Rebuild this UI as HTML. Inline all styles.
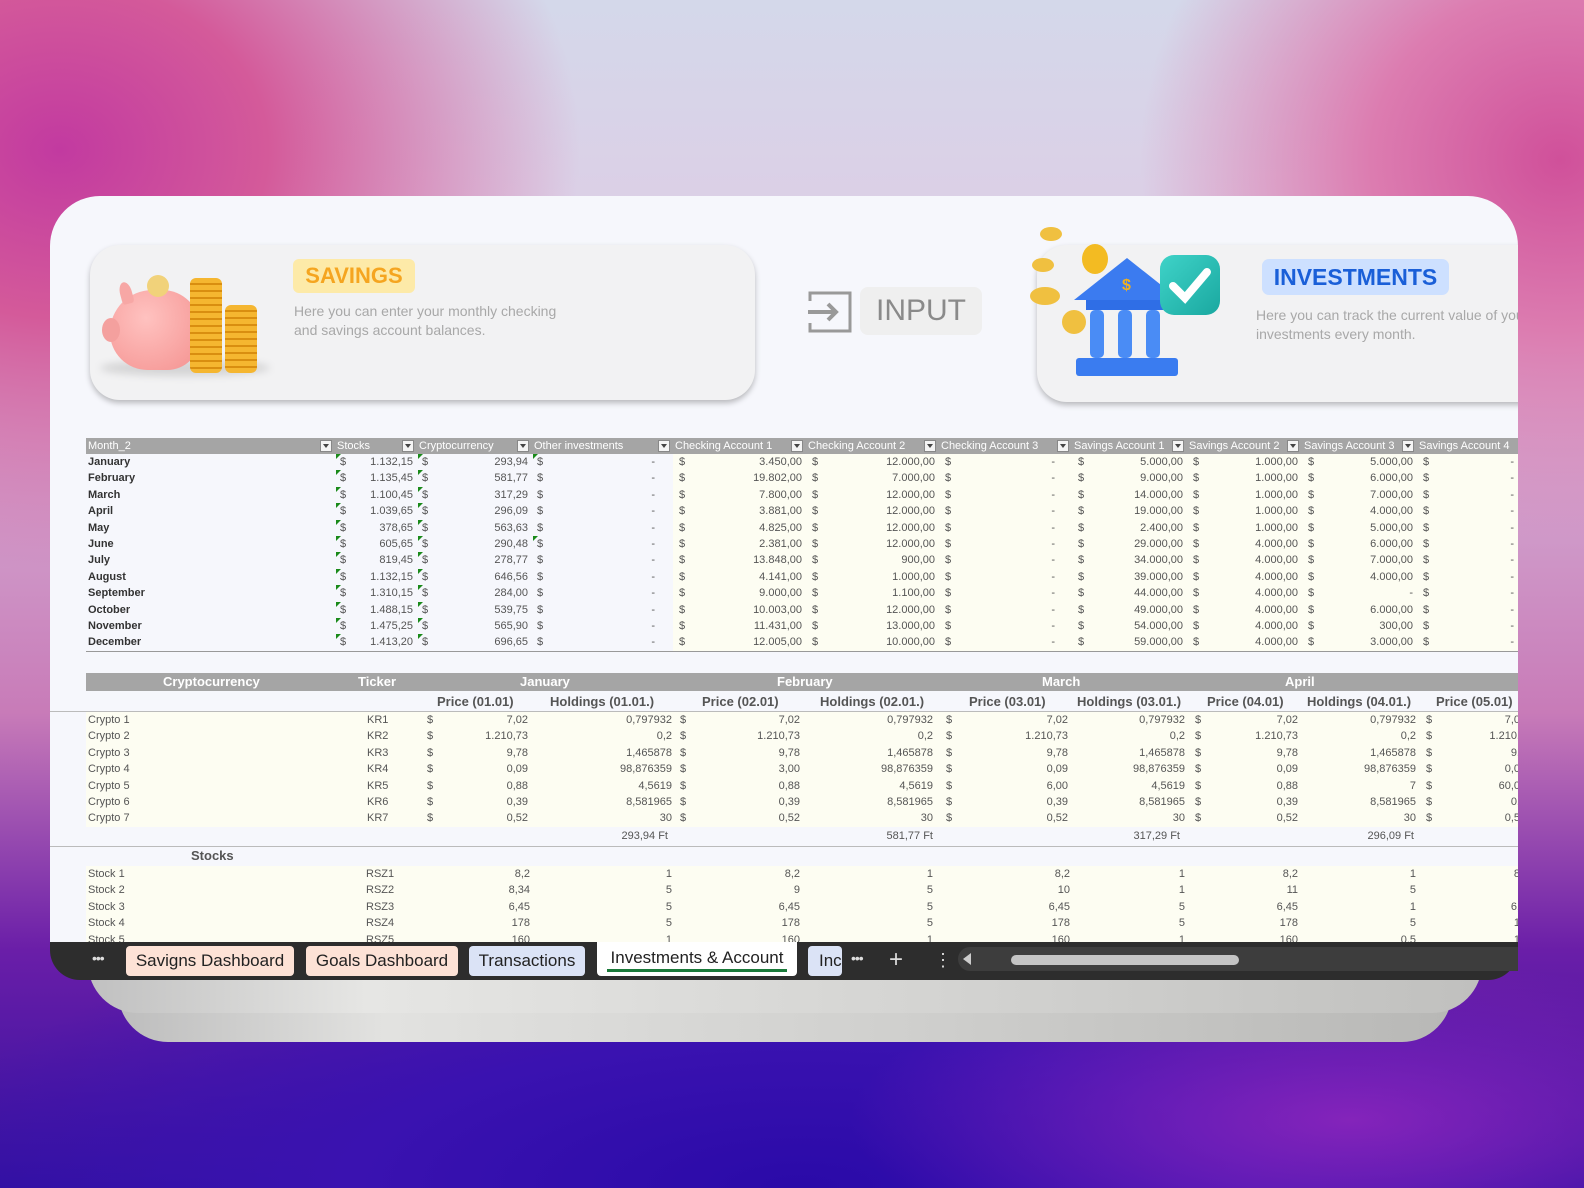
<!DOCTYPE html>
<html><head><meta charset="utf-8"><style>
*{margin:0;padding:0;box-sizing:border-box}
body{width:1584px;height:1188px;overflow:hidden;position:relative;font-family:"Liberation Sans",sans-serif;
background:
radial-gradient(ellipse 520px 420px at 60px 150px,#c23aa0 0%,#d45a9a 40%,rgba(220,120,170,0) 100%),
radial-gradient(ellipse 420px 380px at 1560px 160px,#d0509a 0%,#dc7cb0 45%,rgba(220,150,190,0) 100%),
radial-gradient(ellipse 500px 160px at 1350px 1120px,rgba(150,40,190,.8) 0%,rgba(120,30,180,0) 100%),
radial-gradient(ellipse 900px 300px at 800px 1188px,#2a0aa8 0%,#3a12b0 50%,rgba(60,20,170,0) 100%),
linear-gradient(180deg,#d4d8ea 0%,#dccfe6 18%,#c87bb8 60%,#6a1ea8 80%,#3010a0 100%);}
.layer{position:absolute;border-radius:0 0 50px 50px;background:linear-gradient(90deg,#bdbdbd,#e2e2e0 20%,#cfcfcd 60%,#b8b8b6)}
#win{position:absolute;left:50px;top:196px;width:1468px;height:746px;overflow:hidden;border-radius:50px 50px 0 0;background:#f6f7fc}
#in{position:absolute;left:-50px;top:-196px;width:1584px;height:1188px}
.ab{position:absolute}
.row{position:absolute;left:0;width:1584px;height:16.4px;font-size:11px;line-height:16.4px;color:#555}
.row span{position:absolute;white-space:nowrap}
.m{font-weight:bold;color:#333}
.hd{position:absolute;height:16px;background:#a5a5a5;color:#fff;font-size:11px;line-height:16px}
.hd span{position:absolute;white-space:nowrap}
.dd{position:absolute;top:2px;width:12px;height:12px;background:#f4f4f4;border:1px solid #888}
.dd:after{content:"";position:absolute;left:2px;top:3px;border-left:3px solid transparent;border-right:3px solid transparent;border-top:4px solid #444}
.tri{position:absolute;top:0;width:0;height:0;border-top:5px solid #1a8a1a;border-right:5px solid transparent}
.tab{position:absolute;top:946px;height:30px;border-radius:4px;font-size:17px;line-height:30px;text-align:center;color:#222}
</style></head><body>
<div class="layer" style="left:118px;top:990px;width:1334px;height:52px"></div>
<div class="layer" style="left:88px;top:960px;width:1394px;height:53px;background:linear-gradient(90deg,#c0c0c0,#e6e6e4 20%,#d4d4d2 60%,#c0c0be)"></div>
<div class="ab" style="left:50px;top:940px;width:1468px;height:40px;background:#2d2d2d;border-radius:0 0 30px 30px"></div>
<div id="win"><div id="in">
<!-- savings card -->
<div class="ab" style="left:90px;top:245px;width:665px;height:155px;border-radius:30px;background:#f2f2f3;box-shadow:0 3px 6px rgba(0,0,0,.25)"></div>
<div class="ab" style="left:100px;top:360px;width:170px;height:16px;border-radius:50%;background:rgba(0,0,0,.12);filter:blur(4px)"></div>
<div class="ab" style="left:110px;top:290px;width:90px;height:80px;border-radius:45px 40px 35px 40px;background:radial-gradient(circle at 40% 35%,#ffc2c0,#f4918f)"></div>
<div class="ab" style="left:102px;top:318px;width:18px;height:24px;border-radius:50%;background:#f4a09e"></div>
<div class="ab" style="left:120px;top:282px;width:12px;height:22px;border-radius:50% 50% 20% 20%;background:#f7a7a5;transform:rotate(-15deg)"></div>
<div class="ab" style="left:147px;top:275px;width:22px;height:22px;border-radius:50%;background:#f1d27a"></div>
<div class="ab" style="left:190px;top:278px;width:32px;height:95px;border-radius:6px;background:repeating-linear-gradient(180deg,#f5b630 0 5px,#d98e10 5px 7px)"></div>
<div class="ab" style="left:225px;top:305px;width:32px;height:68px;border-radius:6px;background:repeating-linear-gradient(180deg,#f5b630 0 5px,#d98e10 5px 7px)"></div>
<div class="ab" style="left:293px;top:259px;width:122px;height:34px;border-radius:6px;background:#fdeaa8;color:#f5a520;font-weight:bold;font-size:22px;line-height:34px;text-align:center">SAVINGS</div>
<div class="ab" style="left:294px;top:302px;font-size:14px;line-height:19px;color:#a8a8a8">Here you can enter your monthly checking<br>and savings account balances.</div>
<!-- input -->
<svg class="ab" style="left:806px;top:289px" width="48" height="46" viewBox="0 0 48 46"><path d="M4 12V4h40v38H4v-8" fill="none" stroke="#999" stroke-width="3"/><path d="M2 23h28M22 15l8 8-8 8" fill="none" stroke="#999" stroke-width="4"/></svg>
<div class="ab" style="left:860px;top:287px;width:122px;height:48px;border-radius:8px;background:#efefef;color:#8a8a8a;font-size:30px;line-height:48px;text-align:center">INPUT</div>
<!-- investments -->
<div class="ab" style="left:1037px;top:245px;width:560px;height:157px;border-radius:30px;background:#f2f2f3;box-shadow:0 3px 6px rgba(0,0,0,.25)"></div>
<div class="ab" style="left:1040px;top:227px;width:22px;height:14px;border-radius:50%;background:#f0c040"></div>
<div class="ab" style="left:1082px;top:244px;width:26px;height:30px;border-radius:50%;background:#f3bb22"></div>
<div class="ab" style="left:1032px;top:258px;width:22px;height:14px;border-radius:50%;background:#f0c040"></div>
<div class="ab" style="left:1030px;top:287px;width:30px;height:18px;border-radius:50%;background:#f0c040"></div>
<div class="ab" style="left:1062px;top:310px;width:24px;height:24px;border-radius:50%;background:#f0c040"></div>
<svg class="ab" style="left:1072px;top:256px" width="110" height="122" viewBox="0 0 110 122"><path d="M2 44L55 2l53 42z" fill="#3b7bf0"/><rect x="14" y="44" width="82" height="10" fill="#2f6ee6"/><rect x="18" y="54" width="14" height="48" rx="5" fill="#4a8cf5"/><rect x="46" y="54" width="14" height="48" rx="5" fill="#4a8cf5"/><rect x="74" y="54" width="14" height="48" rx="5" fill="#4a8cf5"/><rect x="4" y="102" width="102" height="18" rx="3" fill="#3a7cf0"/><text x="50" y="34" fill="#f0b020" font-size="16" font-weight="bold" font-family="Liberation Sans">$</text></svg>
<div class="ab" style="left:1160px;top:255px;width:60px;height:60px;border-radius:14px;background:linear-gradient(135deg,#3fd3c8,#1aa8a0)"></div>
<svg class="ab" style="left:1165px;top:262px" width="50" height="46"><path d="M8 24l12 12L42 10" fill="none" stroke="#fff" stroke-width="8" stroke-linecap="round"/></svg>
<div class="ab" style="left:1262px;top:259px;width:187px;height:36px;border-radius:7px;background:#cde0ff;color:#1a5fd8;font-weight:bold;font-size:23px;line-height:36px;text-align:center">INVESTMENTS</div>
<div class="ab" style="left:1256px;top:306px;font-size:14px;line-height:19px;color:#a8a8a8;white-space:nowrap">Here you can track the current value of your<br>investments every month.</div>

<!-- top table -->
<div class="ab" style="left:673px;top:454px;width:900px;height:197px;background:#fdfdf2"></div>
<div class="hd" style="left:86px;top:438px;width:1432px">
<span style="left:2px">Month_2</span><div class="dd" style="left:234px"></div>
<span style="left:251px">Stocks</span><div class="dd" style="left:316px"></div>
<span style="left:333px">Cryptocurrency</span><div class="dd" style="left:431px"></div>
<span style="left:448px">Other investments</span><div class="dd" style="left:572px"></div>
<span style="left:589px">Checking Account 1</span><div class="dd" style="left:705px"></div>
<span style="left:722px">Checking Account 2</span><div class="dd" style="left:838px"></div>
<span style="left:855px">Checking Account 3</span><div class="dd" style="left:971px"></div>
<span style="left:988px">Savings Account 1</span><div class="dd" style="left:1086px"></div>
<span style="left:1103px">Savings Account 2</span><div class="dd" style="left:1201px"></div>
<span style="left:1218px">Savings Account 3</span><div class="dd" style="left:1316px"></div>
<span style="left:1333px">Savings Account 4</span>
</div>
<div id="tt"></div>
<div class="ab" style="left:86px;top:651px;width:1432px;height:1px;background:#999"></div>

<!-- crypto table -->
<div class="ab" style="left:86px;top:712px;width:1500px;height:115px;background:#fdfdf2"></div>
<div class="hd" style="left:86px;top:673px;width:1432px;height:18px;font-size:13px;font-weight:bold;line-height:18px">
<span style="left:77px">Cryptocurrency</span><span style="left:272px">Ticker</span><span style="left:434px">January</span><span style="left:691px">February</span><span style="left:956px">March</span><span style="left:1199px">April</span></div>
<div class="row" style="top:693px;height:18px;font-size:13px;font-weight:bold;line-height:18px">
<span style="left:437px">Price (01.01)</span><span style="left:550px">Holdings (01.01.)</span><span style="left:702px">Price (02.01)</span><span style="left:820px">Holdings (02.01.)</span><span style="left:969px">Price (03.01)</span><span style="left:1077px">Holdings (03.01.)</span><span style="left:1207px">Price (04.01)</span><span style="left:1307px">Holdings (04.01.)</span><span style="left:1436px">Price (05.01)</span></div>
<div class="ab" style="left:50px;top:711px;width:1470px;height:1px;background:#bbb"></div>
<div id="ct"></div>
<div class="row" style="top:828px"><span style="right:916px">293,94 Ft</span><span style="right:651px">581,77 Ft</span><span style="right:404px">317,29 Ft</span><span style="right:170px">296,09 Ft</span></div>
<div class="ab" style="left:50px;top:846px;width:1470px;height:1px;background:#bbb"></div>
<div class="row" style="top:848px;font-size:13px;font-weight:bold"><span style="left:191px">Stocks</span></div>
<div class="ab" style="left:86px;top:866px;width:1500px;height:80px;background:#fdfdf2"></div>
<div id="st"></div>
</div></div>

<!-- tab bar -->
<div class="ab" style="left:92px;top:950px;color:#ddd;font-size:14px;letter-spacing:-1px">•••</div>
<div class="tab" style="left:126px;width:168px;background:#fde2d6">Savigns Dashboard</div>
<div class="tab" style="left:306px;width:152px;background:#fde2d6">Goals Dashboard</div>
<div class="tab" style="left:469px;width:116px;background:#dbe3f6">Transactions</div>
<div class="tab" style="left:597px;width:200px;top:942px;height:34px;background:#fff;border-radius:0 0 4px 4px;line-height:32px">Investments &amp; Account<div class="ab" style="left:10px;bottom:4px;width:180px;height:3px;background:#1a7a3a"></div></div>
<div class="tab" style="left:808px;width:34px;background:#dbe3f6;text-align:left;padding-left:11px;overflow:hidden">Inc</div>
<div class="ab" style="left:851px;top:950px;color:#ddd;font-size:14px;letter-spacing:-1px">•••</div>
<div class="ab" style="left:889px;top:946px;color:#ddd;font-size:24px;line-height:28px">+</div>
<div class="ab" style="left:934px;top:947px;color:#ddd;font-size:18px;line-height:26px">⋮</div>
<div class="ab" style="left:958px;top:947px;width:560px;height:24px;background:#3d3d3d;border-radius:12px 0 0 12px"></div>
<div class="ab" style="left:963px;top:953px;border-top:6px solid transparent;border-bottom:6px solid transparent;border-right:8px solid #ccc"></div>
<div class="ab" style="left:1011px;top:955px;width:228px;height:10px;background:#c4c4c4;border-radius:5px"></div>

<script>
var T=[["January","1.132,15","293,94","3.450,00","12.000,00","5.000,00","1.000,00","5.000,00"],
["February","1.135,45","581,77","19.802,00","7.000,00","9.000,00","1.000,00","6.000,00"],
["March","1.100,45","317,29","7.800,00","12.000,00","14.000,00","1.000,00","7.000,00"],
["April","1.039,65","296,09","3.881,00","12.000,00","19.000,00","1.000,00","4.000,00"],
["May","378,65","563,63","4.825,00","12.000,00","2.400,00","1.000,00","5.000,00"],
["June","605,65","290,48","2.381,00","12.000,00","29.000,00","4.000,00","6.000,00"],
["July","819,45","278,77","13.848,00","900,00","34.000,00","4.000,00","7.000,00"],
["August","1.132,15","646,56","4.141,00","1.000,00","39.000,00","4.000,00","4.000,00"],
["September","1.310,15","284,00","9.000,00","1.100,00","44.000,00","4.000,00","-"],
["October","1.488,15","539,75","10.003,00","12.000,00","49.000,00","4.000,00","6.000,00"],
["November","1.475,25","565,90","11.431,00","13.000,00","54.000,00","4.000,00","300,00"],
["December","1.413,20","696,65","12.005,00","10.000,00","59.000,00","4.000,00","3.000,00"]];
var dol=[340,422,537,679,812,945,1078,1193,1308,1423];
var rt=[413,528,655,802,935,1055,1183,1298,1413,1514];
var h="";
T.forEach(function(r,i){
 var v=[r[1],r[2],"-",r[3],r[4],"-",r[5],r[6],r[7],"-"];
 h+='<div class="row" style="top:'+(454+i*16.4)+'px"><span class="m" style="left:88px">'+r[0]+'</span>';
 h+='<i class="tri" style="left:336px"></i><i class="tri" style="left:418px"></i>';
 if(i==0||i==5)h+='<i class="tri" style="left:533px"></i>';
 for(var k=0;k<10;k++){h+='<span style="left:'+dol[k]+'px">$</span><span style="right:'+(1584-rt[k])+'px">'+v[k]+'</span>';}
 h+='</div>';});
document.getElementById("tt").innerHTML=h;
var C=[["7,02","0,797932","7,02","0,797932","7,02","0,797932","7,02","0,797932","7,0"],
["1.210,73","0,2","1.210,73","0,2","1.210,73","0,2","1.210,73","0,2","1.210,"],
["9,78","1,465878","9,78","1,465878","9,78","1,465878","9,78","1,465878","9,"],
["0,09","98,876359","3,00","98,876359","0,09","98,876359","0,09","98,876359","0,0"],
["0,88","4,5619","0,88","4,5619","6,00","4,5619","0,88","7","60,0"],
["0,39","8,581965","0,39","8,581965","0,39","8,581965","0,39","8,581965","0,"],
["0,52","30","0,52","30","0,52","30","0,52","30","0,5"]];
var cd=[427,680,946,1195,1426];var cr=[528,672,800,933,1068,1185,1298,1416,1520];
h="";
C.forEach(function(r,i){
 h+='<div class="row" style="top:'+(712+i*16.4)+'px"><span style="left:88px">Crypto '+(i+1)+'</span><span style="left:367px">KR'+(i+1)+'</span>';
 cd.forEach(function(x){h+='<span style="left:'+x+'px">$</span>';});
 r.forEach(function(v,k){h+='<span style="right:'+(1584-cr[k])+'px">'+v+'</span>';});
 h+='</div>';});
document.getElementById("ct").innerHTML=h;
var S=[["8,2","1","8,2","1","8,2","1","8,2","1","8"],["8,34","5","9","5","10","1","11","5",""],
["6,45","5","6,45","5","6,45","5","6,45","1","6,"],["178","5","178","5","178","5","178","5","1"],["160","1","160","1","160","1","160","0,5","1"]];
var sr=[530,672,800,933,1070,1185,1298,1416,1520];
h="";
S.forEach(function(r,i){
 h+='<div class="row" style="top:'+(866+i*16.4)+'px"><span style="left:88px">Stock '+(i+1)+'</span><span style="left:366px">RSZ'+(i+1)+'</span>';
 r.forEach(function(v,k){h+='<span style="right:'+(1584-sr[k])+'px">'+v+'</span>';});
 h+='</div>';});
document.getElementById("st").innerHTML=h;
</script>
</body></html>
